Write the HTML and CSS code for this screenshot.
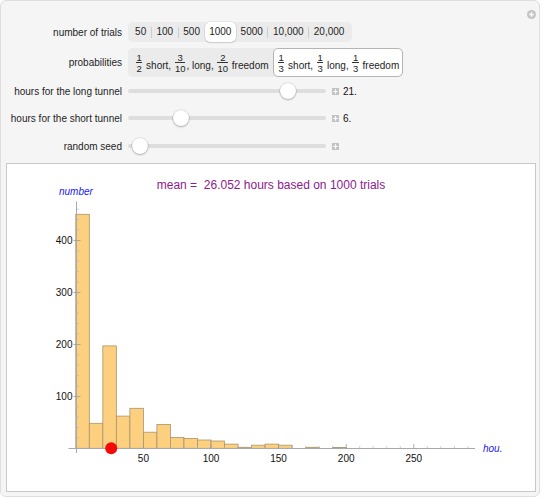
FILE: index.html
```html
<!DOCTYPE html>
<html>
<head>
<meta charset="utf-8">
<link rel="stylesheet" href="styles.css">
</head>
<body>
<div class="panel">
  <span class="corner-plus">
    <svg width="9" height="9" viewBox="0 0 9 9"><circle cx="4.5" cy="4.5" r="4.5" fill="#c4c4c4"/><path d="M4.5 2.2V6.8M2.2 4.5H6.8" stroke="#fff" stroke-width="1.4"/></svg>
  </span>
  <div class="controls">
    <div class="row row-bar">
      <div class="label">number of trials</div>
      <div class="seg-bar">
        <span class="seg">50</span><span class="sep"></span><span class="seg">100</span><span class="sep"></span><span class="seg">500</span><span class="seg seg-on">1000</span><span class="seg">5000</span><span class="sep"></span><span class="seg">10,000</span><span class="sep"></span><span class="seg">20,000</span>
      </div>
    </div>
    <div class="row row-setter">
      <div class="label">probabilities</div>
      <div class="setter">
        <span class="opt"><span class="expr"><span class="frac"><span class="num">1</span><span class="den">2</span></span> short, <span class="frac"><span class="num">3</span><span class="den">10</span></span>, long, <span class="frac"><span class="num">2</span><span class="den">10</span></span> freedom</span></span>
        <span class="opt opt-on"><span class="expr"><span class="frac"><span class="num">1</span><span class="den">3</span></span> short, <span class="frac"><span class="num">1</span><span class="den">3</span></span> long, <span class="frac"><span class="num">1</span><span class="den">3</span></span> freedom</span></span>
      </div>
    </div>
    <div class="row row-slider first-slider">
      <div class="label">hours for the long tunnel</div>
      <div class="slider">
        <div class="track"><span class="thumb" style="left:152px"></span></div>
        <span class="extra"><span class="plus"><svg width="7" height="7" viewBox="0 0 7 7"><rect width="7" height="7" fill="#c2c2c2"/><path d="M3.5 1.3V5.7M1.3 3.5H5.7" stroke="#fff" stroke-width="1.2"/></svg></span><span class="val">21.</span></span>
      </div>
    </div>
    <div class="row row-slider second-slider">
      <div class="label">hours for the short tunnel</div>
      <div class="slider">
        <div class="track"><span class="thumb" style="left:45px"></span></div>
        <span class="extra"><span class="plus"><svg width="7" height="7" viewBox="0 0 7 7"><rect width="7" height="7" fill="#c2c2c2"/><path d="M3.5 1.3V5.7M1.3 3.5H5.7" stroke="#fff" stroke-width="1.2"/></svg></span><span class="val">6.</span></span>
      </div>
    </div>
    <div class="row row-slider third-slider">
      <div class="label">random seed</div>
      <div class="slider">
        <div class="track"><span class="thumb" style="left:4px"></span></div>
        <span class="extra"><span class="plus"><svg width="7" height="7" viewBox="0 0 7 7"><rect width="7" height="7" fill="#c2c2c2"/><path d="M3.5 1.3V5.7M1.3 3.5H5.7" stroke="#fff" stroke-width="1.2"/></svg></span></span>
      </div>
    </div>
  </div>
  <div class="plot">
    <svg class="chart" width="528" height="327" viewBox="7 164 528 327">
      <text class="title" x="271" y="189" text-anchor="middle">mean =  26.052 hours based on 1000 trials</text>
      <text class="axis-name" x="59" y="194.5">number</text>
      <text class="axis-name" x="483" y="452">hou.</text>
      <g class="bars">
        <rect x="75.8" y="214.3" width="13.52" height="234"/>
        <rect x="89.32" y="423.3" width="13.52" height="25"/>
        <rect x="102.84" y="345.9" width="13.52" height="102.4"/>
        <rect x="116.36" y="416.1" width="13.52" height="32.2"/>
        <rect x="129.88" y="408.3" width="13.52" height="40"/>
        <rect x="143.4" y="432.2" width="13.52" height="16.1"/>
        <rect x="156.92" y="424.4" width="13.52" height="23.9"/>
        <rect x="170.44" y="437.4" width="13.52" height="10.9"/>
        <rect x="183.96" y="438.4" width="13.52" height="9.9"/>
        <rect x="197.48" y="440" width="13.52" height="8.3"/>
        <rect x="211.0" y="441" width="13.52" height="7.3"/>
        <rect x="224.52" y="444.1" width="13.52" height="4.2"/>
        <rect x="238.04" y="447.3" width="13.52" height="1"/>
        <rect x="251.56" y="445.2" width="13.52" height="3.1"/>
        <rect x="265.08" y="444.1" width="13.52" height="4.2"/>
        <rect x="278.6" y="445.2" width="13.52" height="3.1"/>
        <rect x="305.64" y="447.3" width="13.52" height="1"/>
        <rect x="332.68" y="447.5" width="13.52" height="0.8"/>
      </g>
      <path class="axis" d="M68.5 448.5H475M76.5 201.5V453"/>
      <path class="tick" d="M73.5 396.5H80.5M73.5 344.5H80.5M73.5 292.5H80.5M73.5 240.5H80.5"/>
      <path class="tick minor" d="M76.5 437.9H79M76.5 427.5H79M76.5 417.1H79M76.5 406.7H79M76.5 385.9H79M76.5 375.5H79M76.5 365.1H79M76.5 354.7H79M76.5 333.9H79M76.5 323.5H79M76.5 313.1H79M76.5 302.7H79M76.5 281.9H79M76.5 271.5H79M76.5 261.1H79M76.5 250.7H79M76.5 229.9H79M76.5 219.5H79M76.5 209.1H79"/>
      <path class="tick" d="M143.4 448.5V444M211 448.5V444M278.6 448.5V444M346.2 448.5V444M413.8 448.5V444"/>
      <path class="tick minor" d="M89.3 448.5V446M102.8 448.5V446M116.4 448.5V446M129.9 448.5V446M156.9 448.5V446M170.4 448.5V446M184 448.5V446M197.5 448.5V446M224.5 448.5V446M238 448.5V446M251.6 448.5V446M265.1 448.5V446M292.1 448.5V446M305.6 448.5V446M319.2 448.5V446M332.7 448.5V446M359.7 448.5V446M373.2 448.5V446M386.8 448.5V446M400.3 448.5V446M427.3 448.5V446M440.8 448.5V446M454.4 448.5V446M467.9 448.5V446"/>
      <g class="tick-label">
        <text x="72.5" y="400" text-anchor="end">100</text>
        <text x="72.5" y="348" text-anchor="end">200</text>
        <text x="72.5" y="296" text-anchor="end">300</text>
        <text x="72.5" y="244" text-anchor="end">400</text>
        <text x="143.4" y="461.5" text-anchor="middle">50</text>
        <text x="211" y="461.5" text-anchor="middle">100</text>
        <text x="278.6" y="461.5" text-anchor="middle">150</text>
        <text x="346.2" y="461.5" text-anchor="middle">200</text>
        <text x="413.8" y="461.5" text-anchor="middle">250</text>
      </g>
      <circle class="mean-dot" cx="111.2" cy="448.3" r="6"/>
    </svg>
  </div>
</div>
</body>
</html>
```

FILE: styles.css
```css
html, body {
  margin: 0;
  padding: 0;
  background: #ffffff;
}

.panel {
  position: relative;
  width: 540px;
  height: 497px;
  box-sizing: border-box;
  border: 1px solid #dedede;
  border-radius: 6px;
  background: #f5f5f5;
  padding: 21px 3px 4px 5px;
  font-family: "Liberation Sans", Arial, sans-serif;
  font-size: 10px;
  color: #1e1e1e;
}

.corner-plus {
  position: absolute;
  left: 525.5px;
  top: 9px;
  width: 9px;
  height: 9px;
  line-height: 0;
}

.controls {
  display: flex;
  flex-direction: column;
}

.row {
  display: flex;
  align-items: center;
  gap: 6px;
}

.label {
  width: 116px;
  flex: none;
  text-align: right;
  white-space: nowrap;
}

.row-bar {
  height: 20px;
}

.row-setter {
  height: 29px;
  margin-top: 6px;
}

.row-slider {
  height: 16px;
}

.first-slider {
  margin-top: 6px;
}

.second-slider {
  margin-top: 11px;
}

.third-slider {
  margin-top: 12px;
}

/* segmented button bar */
.seg-bar {
  display: flex;
  align-items: center;
  height: 20px;
  padding: 0 2.5px;
  background: #ebebeb;
  border-radius: 5px;
}

.seg {
  padding: 0 4.6px;
  height: 20px;
  line-height: 20px;
  white-space: nowrap;
}

.seg-on {
  background: #ffffff;
  border-radius: 5px;
  box-shadow: 0 0 0 0.5px rgba(0, 0, 0, 0.12), 0 1px 1.5px rgba(0, 0, 0, 0.12);
}

.sep {
  width: 1px;
  height: 11px;
  background: #cdcdcd;
}

/* setter bar with fractions */
.setter {
  display: flex;
  height: 29px;
  background: #ebebeb;
  border-radius: 5px;
}

.opt {
  display: flex;
  align-items: center;
  padding: 0 4.5px 0 7px;
  white-space: nowrap;
}

.opt-on {
  background: #ffffff;
  border: 1px solid #b4b4b4;
  border-radius: 5px;
  padding: 0 3px 0 3px;
  box-sizing: border-box;
}

.expr {
  line-height: 12px;
  padding-top: 2px;
}

.frac {
  display: inline-flex;
  flex-direction: column;
  align-items: center;
  vertical-align: 7.5px;
  font-size: 9.5px;
  line-height: 8px;
  margin: 0 1px;
}

.num {
  align-self: stretch;
  text-align: center;
  padding: 0 0.5px 0.8px;
  border-bottom: 0.8px solid #333;
}

.den {
  padding-top: 2px;
}

/* sliders */
.slider {
  display: flex;
  align-items: center;
  gap: 6px;
}

.track {
  position: relative;
  width: 198px;
  height: 4px;
  background: #dedede;
  border-radius: 2px;
}

.thumb {
  position: absolute;
  top: 50%;
  width: 16px;
  height: 16px;
  margin-top: -8px;
  border-radius: 50%;
  background: #ffffff;
  box-shadow: 0 0 0 0.5px rgba(0, 0, 0, 0.15), 0 1px 2px rgba(0, 0, 0, 0.25);
}

.extra {
  display: flex;
  align-items: center;
  gap: 4px;
}

.plus {
  width: 7px;
  height: 7px;
  line-height: 0;
}

.val {
  color: #111;
}

/* plot */
.plot {
  margin-top: 9px;
  width: 530px;
  height: 329px;
  box-sizing: border-box;
  border: 1px solid #c8c8c8;
  background: #ffffff;
}

.chart {
  display: block;
}

.title {
  font-family: "Liberation Sans", Arial, sans-serif;
  font-size: 12px;
  fill: #8e1a8e;
  white-space: pre;
}

.axis-name {
  font-family: "Liberation Sans", Arial, sans-serif;
  font-size: 10px;
  font-style: italic;
  fill: #2020ee;
}

.bars rect {
  fill: #fdd07f;
  stroke: #a8946f;
  stroke-width: 0.8;
}

.axis {
  fill: none;
  stroke: #a9a9a9;
  stroke-width: 1;
}

.tick {
  fill: none;
  stroke: #9c9c9c;
  stroke-width: 0.8;
}

.tick.minor {
  stroke: #b0b0b0;
  stroke-width: 0.6;
}

.tick-label {
  font-family: "Liberation Sans", Arial, sans-serif;
  font-size: 10px;
  fill: #111;
}

.mean-dot {
  fill: #f50a0a;
}
```
